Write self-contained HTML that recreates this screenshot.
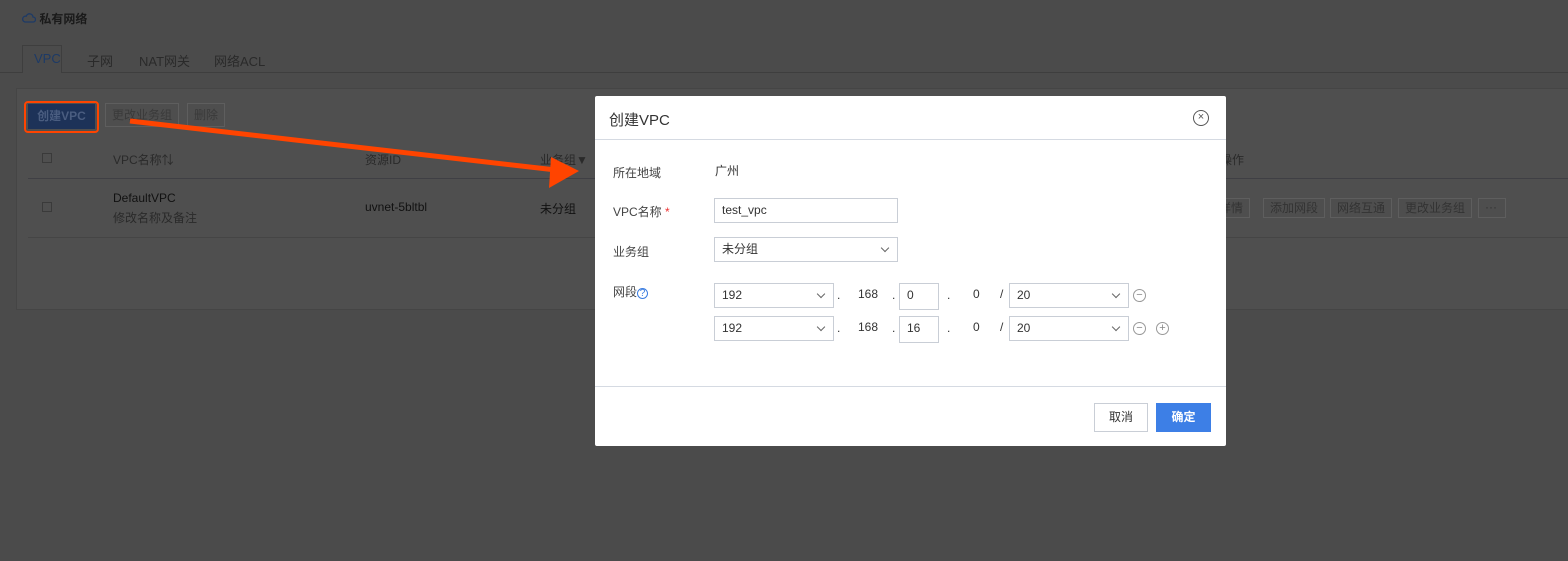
<!DOCTYPE html>
<html style="background:#4b4b4b"><head><meta charset="utf-8"><style>
*{margin:0;padding:0;box-sizing:border-box}
html,body{background:#4b4b4b}
body{width:1568px;height:561px;overflow:hidden;font-family:"Liberation Sans","Noto Sans CJK SC",sans-serif;font-size:12px;color:#1a1a1a;position:relative}
.a{position:absolute}
.dim{color:#2a2a2a}
.btn{position:absolute;border:1px solid #5e5e5e;height:24px;line-height:22px;padding:0 6px;color:#333;font-size:12px;background:#4e4e4e}
.m{position:absolute;left:595px;top:96px;width:631px;height:350px;background:#fff;border-radius:2px}
.lbl{position:absolute;left:18px;color:#444;font-size:12px}
.in{position:absolute;border:1px solid #c9ced6;height:25px;line-height:23px;padding-left:7px;color:#333;font-size:12px;background:#fff}
.chev{position:absolute;right:9px;top:7px;width:6px;height:6px;border-right:1px solid #666;border-bottom:1px solid #666;transform:rotate(45deg)}
.t{position:absolute;font-size:12px;color:#333}
.circ{position:absolute;width:13px;height:13px;border:1px solid #999;border-radius:50%;font-size:11px;line-height:10px;text-align:center;color:#888}
</style></head><body>
<div class="a" style="left:0;top:0;width:1568px;height:561px;background:#4b4b4b"></div>
<div class="a" style="left:22px;top:10px;color:#1a1a1a;font-size:12px;font-weight:bold">
<svg width="14" height="12" viewBox="0 0 14 12" style="vertical-align:-1px"><path d="M3 10h8a2.5 2.5 0 0 0 0-5 3.5 3.5 0 0 0-6.8-.8A2.8 2.8 0 0 0 3 10z" fill="none" stroke="#1d3a66" stroke-width="1.3"/></svg> 私有网络</div>
<div class="a" style="left:0;top:72px;width:1568px;height:1px;background:#3e3e3e"></div>
<div class="a" style="left:22px;top:45px;width:40px;height:28px;border:1px solid #3e3e3e;border-bottom:none;background:#4b4b4b"></div>
<div class="a" style="left:34px;top:51px;color:#1d3a66;font-size:13px">VPC</div>
<div class="a dim" style="left:87px;top:51px;font-size:13px">子网</div>
<div class="a dim" style="left:139px;top:51px;font-size:13px">NAT网关</div>
<div class="a dim" style="left:214px;top:51px;font-size:13px">网络ACL</div>
<div class="a" style="left:16px;top:88px;width:1560px;height:222px;background:#4f4f4f;border:1px solid #454545"></div>
<div class="a" style="left:24px;top:101px;width:75px;height:32px;border:2px solid #ff4400;border-radius:4px"></div>
<div class="a" style="left:28px;top:104px;width:67px;height:25px;background:#1d3258;color:#4a5d80;line-height:25px;text-align:center;font-size:12px;font-weight:bold">创建VPC</div>
<div class="btn" style="left:105px;top:103px;color:#3a3a3a">更改业务组</div>
<div class="btn" style="left:187px;top:103px;color:#3a3a3a">删除</div>
<div class="a" style="left:42px;top:153px;width:10px;height:10px;border:1px solid #3a3a3a"></div>
<div class="a dim" style="left:113px;top:151px">VPC名称⇅</div>
<div class="a dim" style="left:365px;top:151px">资源ID</div>
<div class="a dim" style="left:540px;top:151px">业务组▼</div>
<div class="a dim" style="left:1220px;top:151px">操作</div>
<div class="a" style="left:28px;top:178px;width:1540px;height:1px;background:#3f3f44"></div>
<div class="a" style="left:28px;top:237px;width:1540px;height:1px;background:#454545"></div>
<div class="a" style="left:42px;top:202px;width:10px;height:10px;border:1px solid #3a3a3a"></div>
<div class="a" style="left:113px;top:191px;color:#111">DefaultVPC</div>
<div class="a dim" style="left:113px;top:209px">修改名称及备注</div>
<div class="a" style="left:365px;top:200px;color:#111">uvnet-5bltbl</div>
<div class="a" style="left:540px;top:200px;color:#111">未分组</div>
<div class="btn" style="left:1212px;top:198px;height:20px;line-height:18px">详情</div>
<div class="btn" style="left:1263px;top:198px;height:20px;line-height:18px">添加网段</div>
<div class="btn" style="left:1330px;top:198px;height:20px;line-height:18px">网络互通</div>
<div class="btn" style="left:1398px;top:198px;height:20px;line-height:18px">更改业务组</div>
<div class="btn" style="left:1478px;top:198px;height:20px;line-height:16px;width:28px">···</div>
<svg class="a" style="left:0;top:0" width="1568" height="561"><path d="M130 121 L556 170" stroke="#ff4400" stroke-width="5"/><path d="M579 171 L551 157 L549 188 Z" fill="#ff4400"/></svg>
<div class="m">
<div class="a" style="left:14px;top:13px;font-size:15px;color:#333">创建VPC</div>
<div class="a" style="left:598px;top:14px;width:16px;height:16px;border:1.5px solid #555;border-radius:50%;text-align:center;line-height:12px;font-size:11px;color:#555">×</div>
<div class="a" style="left:0;top:43px;width:631px;height:1px;background:#d5dae2"></div>
<div class="lbl" style="top:68px">所在地域</div>
<div class="t" style="left:120px;top:66px">广州</div>
<div class="lbl" style="top:107px">VPC名称 <span style="color:#e33">*</span></div>
<div class="in" style="left:119px;top:102px;width:184px">test_vpc</div>
<div class="lbl" style="top:147px">业务组</div>
<div class="in" style="left:119px;top:141px;width:184px">未分组<span class="chev"></span></div>
<div class="lbl" style="top:187px">网段<span style="color:#3b7de0;font-size:10px;border:1px solid #3b7de0;border-radius:50%;display:inline-block;width:11px;height:11px;line-height:9px;text-align:center">?</span></div>
<div class="in" style="left:119px;top:187px;width:120px">192<span class="chev"></span></div>
<div class="t" style="left:242px;top:192px">.</div><div class="t" style="left:263px;top:191px">168</div><div class="t" style="left:297px;top:192px">.</div>
<div class="in" style="left:304px;top:187px;width:40px;height:27px">0</div>
<div class="t" style="left:352px;top:192px">.</div><div class="t" style="left:378px;top:191px">0</div><div class="t" style="left:405px;top:191px">/</div>
<div class="in" style="left:414px;top:187px;width:120px">20<span class="chev"></span></div>
<div class="circ" style="left:538px;top:193px">−</div>
<div class="in" style="left:119px;top:220px;width:120px">192<span class="chev"></span></div>
<div class="t" style="left:242px;top:225px">.</div><div class="t" style="left:263px;top:224px">168</div><div class="t" style="left:297px;top:225px">.</div>
<div class="in" style="left:304px;top:220px;width:40px;height:27px">16</div>
<div class="t" style="left:352px;top:225px">.</div><div class="t" style="left:378px;top:224px">0</div><div class="t" style="left:405px;top:224px">/</div>
<div class="in" style="left:414px;top:220px;width:120px">20<span class="chev"></span></div>
<div class="circ" style="left:538px;top:226px">−</div>
<div class="circ" style="left:561px;top:226px">+</div>
<div class="a" style="left:0;top:290px;width:631px;height:1px;background:#d5dae2"></div>
<div class="a" style="left:499px;top:307px;width:54px;height:29px;border:1px solid #c9ced6;text-align:center;line-height:27px;color:#333">取消</div>
<div class="a" style="left:561px;top:307px;width:55px;height:29px;background:#3d7fe6;text-align:center;line-height:29px;color:#fff;font-weight:bold">确定</div>
</div>
</body></html>
